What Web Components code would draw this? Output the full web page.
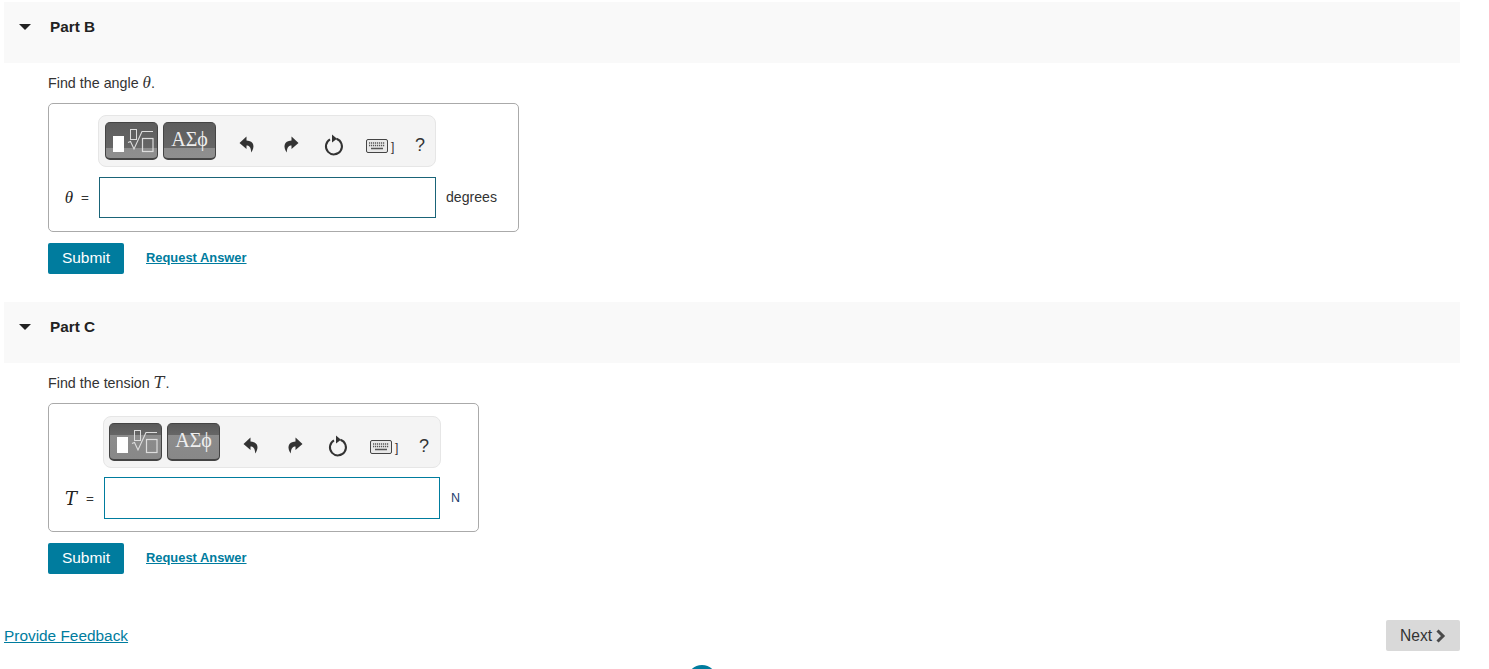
<!DOCTYPE html>
<html lang="en">
<head>
<meta charset="utf-8">
<title>Parts</title>
<style>
    html, body { margin: 0; padding: 0; background: #fff; }
    body { font-family: "Liberation Sans", Arial, sans-serif; color: #333; height: 669px; overflow: hidden; }
    var { font-family: "Liberation Serif", serif; font-style: italic; font-size: 17px; }
    var.t { font-family: "DejaVu Serif", serif; font-size: 16px; margin-right: 1px; }
    math-part + math-part { margin-top: 28px; }
</style>
</head>
<body>
<assignment-page>
    <math-part label="Part B">
        <span slot="prompt">Find the angle <var>θ</var>.</span>
        <answer-box symbol="θ" unit="degrees" variant="b"></answer-box>
    </math-part>
    <math-part label="Part C">
        <span slot="prompt">Find the tension <var class="t">T</var>.</span>
        <answer-box symbol="T" unit="N" variant="c"></answer-box>
    </math-part>
</assignment-page>

<script>
class AssignmentPage extends HTMLElement {
    constructor() {
        super();
        this.attachShadow({ mode: 'open' });
        this.shadowRoot.innerHTML = `
        <style>
            :host {
                display: block;
                width: 1456px;
                margin-left: 4px;
                padding-top: 2px;
                position: relative;
                height: 667px;
            }
            footer {
                display: flex;
                justify-content: space-between;
                align-items: center;
                margin-top: 46px;
                height: 31px;
            }
            a {
                color: #007c9e;
                font-size: 15.4px;
            }
            .next {
                display: flex;
                align-items: center;
                justify-content: center;
                gap: 3px;
                width: 74px;
                height: 31px;
                background: #d9d9d9;
                border-radius: 2px;
                color: #333;
                font-size: 15.6px;
            }
            .chat {
                position: absolute;
                left: 683px;
                top: 665px;
                width: 30px;
                height: 30px;
                border-radius: 50%;
                background: #007c9e;
            }
        </style>
        <slot></slot>
        <footer>
            <a href="#">Provide Feedback</a>
            <div class="next">Next
                <svg width="11" height="14" viewBox="0 0 11 14"><path d="M2.5 1.5 L8 7 L2.5 12.5" fill="none" stroke="#4a4a4a" stroke-width="3"/></svg>
            </div>
        </footer>
        <div class="chat"></div>
        `;
    }
}

class MathPart extends HTMLElement {
    constructor() {
        super();
        this.attachShadow({ mode: 'open' });
        this.shadowRoot.innerHTML = `
        <style>
            :host { display: block; }
            header {
                display: flex;
                align-items: center;
                height: 61px;
                padding-bottom: 12px;
                box-sizing: border-box;
                background: #f9f9f9;
                font-size: 15.3px;
                font-weight: bold;
                color: #222;
            }
            svg { margin: 0 19px 0 15px; }
            .body { padding-left: 44px; }
            .prompt {
                font-size: 14.3px;
                line-height: 18px;
                padding-top: 11px;
                margin-bottom: 11px;
                color: #333;
            }
            ::slotted(span) { display: block; }
        </style>
        <header>
            <svg width="12" height="6" viewBox="0 0 12 6"><path d="M0 0 H12 L6 6 Z" fill="#222"/></svg>
            <span class="label"></span>
        </header>
        <div class="body">
            <div class="prompt"><slot name="prompt"></slot></div>
            <slot></slot>
        </div>
        `;
    }

    connectedCallback() {
        this.shadowRoot.querySelector(".label").textContent = this.getAttribute("label");
    }
}

class MathToolbar extends HTMLElement {
    constructor() {
        super();
        this.attachShadow({ mode: 'open' });
        this.shadowRoot.innerHTML = `
        <style>
            :host {
                display: flex;
                align-items: center;
                box-sizing: border-box;
                width: 338px;
                height: 52px;
                padding-left: var(--tb-pad);
                background: #f4f4f4;
                border: 1px solid #e6e6e6;
                border-radius: 8px;
                color: #333;
            }
            .tpl {
                display: flex;
                align-items: center;
                justify-content: center;
                box-sizing: border-box;
                height: 38px;
                width: 53px;
                margin-right: 5px;
                border: 1px solid #444;
                border-bottom-width: 2px;
                border-radius: 5px;
                background: var(--btn-bg);
                color: #eee;
                font-family: "Liberation Serif", serif;
                font-size: 20px;
            }
            .tpl svg { display: block; }
            .sym { padding-bottom: 3px; }
            .slot {
                display: flex;
                justify-content: center;
                align-items: center;
                width: 44px;
                height: 100%;
                padding-top: 7px;
                box-sizing: border-box;
            }
            .first { margin-left: 4px; }
            .reset { margin-left: -1px; }
            .kbd { margin-left: 10px; margin-top: 10px; }
            .bracket { font-size: 12px; margin: 11px 0 0 3px; width: 24px; }
            .help { font-size: 18px; padding-top: 9px; }
        </style>
        <div class="tpl math">
            <svg width="51" height="35" viewBox="1 1 51 35">
                <rect x="8" y="14" width="11" height="16" fill="#fff"/>
                <rect x="25.5" y="7.5" width="6" height="10" fill="none" stroke="#ddd"/>
                <path d="M23 20.5 L25.5 19.5 L29 27 L37 9.5 H48" fill="none" stroke="#ddd" stroke-width="1.1"/>
                <rect x="37.5" y="16.5" width="10.5" height="13" fill="none" stroke="#ddd" stroke-width="1.2"/>
            </svg>
        </div>
        <div class="tpl sym">ΑΣϕ</div>
        <div class="slot first">
            <svg width="16" height="17" viewBox="0 0 16 17"><path d="M7.5 0.5 L0.5 7 L7.5 13 V9.5 C10 9.5 12 11 12.2 16.5 C16 11 15.5 5 7.5 4.5 Z" fill="#333"/></svg>
        </div>
        <div class="slot">
            <svg width="16" height="17" viewBox="0 0 16 17"><path d="M8.5 0.5 L15.5 7 L8.5 13 V9.5 C6 9.5 4 11 3.8 16.5 C0 11 0.5 5 8.5 4.5 Z" fill="#333"/></svg>
        </div>
        <div class="slot reset">
            <svg width="20" height="22" viewBox="0 0 20 22">
                <path d="M12.5 4.8 A8 8 0 1 1 6 5.4" fill="none" stroke="#333" stroke-width="2"/>
                <path d="M8 0.5 L13 4.8 L8 8.5 Z" fill="#333"/>
            </svg>
        </div>
        <svg class="kbd" width="22" height="14" viewBox="0 0 22 14">
            <rect x="0.5" y="0.5" width="21" height="13" rx="1.5" fill="#e8e8e8" stroke="#444"/>
            <path d="M3 4 H19" stroke="#555" stroke-width="1.5" stroke-dasharray="1.2 0.8"/>
            <path d="M3 6.5 H19" stroke="#555" stroke-width="1.5" stroke-dasharray="1.2 0.8"/>
            <path d="M5 9.5 H17" stroke="#555" stroke-width="1.5"/>
        </svg>
        <div class="bracket">]</div>
        <div class="help">?</div>
        `;
    }
}

class AnswerBox extends HTMLElement {
    constructor() {
        super();
        this.attachShadow({ mode: 'open' });
        this.shadowRoot.innerHTML = `
        <style>
            :host { display: block; }
            .box {
                display: inline-grid;
                grid-template-columns: var(--label-w) auto auto;
                row-gap: var(--row-gap);
                align-items: center;
                align-content: start;
                box-sizing: border-box;
                height: 129px;
                padding-top: var(--pad-top);
                border: 1px solid #aaa;
                border-radius: 5px;
            }
            math-toolbar { grid-column: 2 / 4; margin-left: -1px; justify-self: start; }
            .label {
                display: flex;
                justify-content: flex-end;
                align-items: center;
                gap: var(--label-gap);
                padding-right: 10px;
                font-size: 13.5px;
            }
            .label var {
                font-family: var(--sym-font);
                font-style: italic;
                font-size: var(--sym-size);
                color: #222;
            }
            .input {
                box-sizing: border-box;
                width: var(--input-w);
                height: var(--input-h);
                background: #fff;
                border: 1px solid var(--input-border);
            }
            .unit {
                padding-left: var(--unit-left);
                padding-right: var(--unit-right);
                padding-bottom: var(--unit-bottom);
                font-size: var(--unit-size);
                color: var(--unit-color);
            }
            .actions {
                display: flex;
                align-items: center;
                gap: 22px;
                margin-top: 11px;
            }
            .submit {
                display: flex;
                align-items: center;
                justify-content: center;
                width: 76px;
                height: 31px;
                padding-bottom: 1px;
                box-sizing: border-box;
                background: #007c9e;
                border-radius: 2px;
                color: #fff;
                font-size: 15.5px;
            }
            a {
                color: #007c9e;
                font-size: 12.9px;
                font-weight: bold;
                position: relative;
                top: -1px;
            }
        </style>
        <div class="box">
            <math-toolbar></math-toolbar>
            <div class="label"><var></var><span>=</span></div>
            <div class="input"></div>
            <div class="unit"></div>
        </div>
        <div class="actions">
            <div class="submit">Submit</div>
            <a href="#">Request Answer</a>
        </div>
        `;
    }

    connectedCallback() {
        const root = this.shadowRoot;
        const isB = this.getAttribute("variant") === "b";
        root.querySelector(".label var").textContent = this.getAttribute("symbol");
        root.querySelector(".unit").textContent = this.getAttribute("unit");
        const vars = isB ? {
            "--label-w": "50px", "--row-gap": "10px", "--pad-top": "11px", "--tb-pad": "6px",
            "--input-w": "337px", "--input-h": "41px", "--input-border": "#1a6478",
            "--unit-left": "10px", "--unit-right": "21px", "--unit-bottom": "2px", "--unit-size": "14.1px", "--unit-color": "#333",
            "--sym-size": "17px", "--sym-font": '"Liberation Serif", serif', "--label-gap": "8px",
            "--btn-bg": "linear-gradient(#5d5d5d 0, #666 72%, #8d8d8d 72%, #8f8f8f 100%)"
        } : {
            "--label-w": "55px", "--row-gap": "9px", "--pad-top": "12px", "--tb-pad": "5px",
            "--input-w": "336px", "--input-h": "42px", "--input-border": "#007c9e",
            "--unit-left": "11px", "--unit-right": "18px", "--unit-bottom": "0", "--unit-size": "12.5px", "--unit-color": "#1c3d6e",
            "--sym-size": "18px", "--sym-font": '"DejaVu Serif", serif', "--label-gap": "9px",
            "--btn-bg": "linear-gradient(#5a5a5a 0, #666 30%, #8c8c8c 30%, #888 100%)"
        };
        for (const name in vars) {
            this.style.setProperty(name, vars[name]);
        }
    }
}

customElements.define('assignment-page', AssignmentPage);
customElements.define('math-part', MathPart);
customElements.define('math-toolbar', MathToolbar);
customElements.define('answer-box', AnswerBox);
</script>
</body>
</html>
